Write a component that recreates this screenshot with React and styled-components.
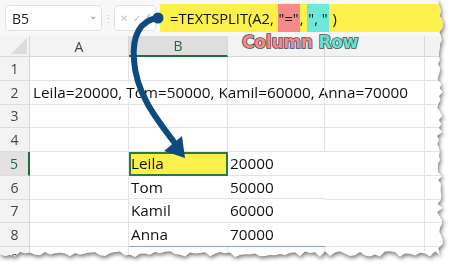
import React from 'react';
import styled, { createGlobalStyle } from 'styled-components';

const GlobalStyle = createGlobalStyle`
  html, body { margin: 0; padding: 0; background: #ffffff; }
  body { width: 450px; height: 270px; overflow: hidden; font-family: "Open Sans", "Noto Sans", sans-serif; }
`;

// jagged outline for the torn right and bottom edges
const rnd = (i) => {
  const x = Math.sin(i * 12.9898 + 78.233) * 43758.5453;
  return x - Math.floor(x);
};
const tornPath = (() => {
  const pts = ['0px 0px', '438px 0px'];
  for (let y = 4; y < 252; y += 4) pts.push(`${437 + rnd(y) * 6}px ${y}px`);
  for (let x = 440; x > 0; x -= 5) pts.push(`${x}px ${251 + rnd(x + 300) * 6}px`);
  pts.push('0px 254px');
  return `polygon(${pts.join(',')})`;
})();

// C, D and E letters sit under the annotation in the screenshot
const columns = ['A', 'B', '', '', ''];
const people = [
  ['Leila', '20000'],
  ['Tom', '50000'],
  ['Kamil', '60000'],
  ['Anna', '70000'],
];

const App = () => {
  return (
    <>
      <GlobalStyle />
      <Page>
        <Shadow>
          <Paper style={{ clipPath: tornPath }}>
            <FormulaBar>
              <NameBox>
                B5
                <Chevron>⌄</Chevron>
              </NameBox>
              <Dots>⋮</Dots>
              <ActionBox>
                <span>✕</span>
                <span>✓</span>
                <Fx>fx</Fx>
              </ActionBox>
              <Formula>
                =TEXTSPLIT(A2,&nbsp;<Mark color="#f58a86">"="</Mark>,&nbsp;<Mark color="#6ee8d8">", "</Mark>&nbsp;)
              </Formula>
            </FormulaBar>

            <Sheet>
              <Corner />
              {columns.map((c, i) => (
                <ColHead key={i} active={c === 'B'}>{c}</ColHead>
              ))}

              {[1, 2, 3, 4].map((r) => (
                <React.Fragment key={r}>
                  <RowHead>{r}</RowHead>
                  <Cell>
                    {r === 2 && <Overflow>Leila=20000, Tom=50000, Kamil=60000, Anna=70000</Overflow>}
                  </Cell>
                  <Cell />
                  <Cell />
                  <Cell />
                  <Cell />
                </React.Fragment>
              ))}

              {people.map(([name], i) => (
                <React.Fragment key={name}>
                  <RowHead active={i === 0}>{i + 5}</RowHead>
                  <Cell />
                  {i === 0 && (
                    <Spill>
                      {people.map(([n, a], j) => (
                        <React.Fragment key={n}>
                          <SpillCell active={j === 0} last={j === 3}>{n}</SpillCell>
                          <SpillCell last={j === 3}>{a}</SpillCell>
                        </React.Fragment>
                      ))}
                    </Spill>
                  )}
                  <Cell />
                  <Cell />
                </React.Fragment>
              ))}

              <RowHead>9</RowHead>
              <Cell />
              <Cell />
              <Cell />
              <Cell />
              <Cell />
            </Sheet>
          </Paper>
        </Shadow>

        <Label>
          <Word fill="#f28a88">Column</Word> <Word fill="#63e3cb">Row</Word>
        </Label>

        <Arrow width="450" height="270" viewBox="0 0 450 270">
          <path
            d="M158 18 C140 20 132 36 134 60 C136 92 154 116 174 142"
            fill="none"
            stroke="#0d4a80"
            strokeWidth="6"
            strokeLinecap="round"
          />
          <circle cx="158" cy="18" r="5.5" fill="#0d4a80" />
          <polygon points="185,158 164,151 182,136" fill="#0d4a80" />
        </Arrow>
      </Page>
    </>
  );
};

export default App;

const Page = styled.div`
  position: relative;
  width: 450px;
  height: 270px;
  background: #ffffff;
`;

const Shadow = styled.div`
  width: 450px;
  height: 264px;
  filter: drop-shadow(1px 2px 2px rgba(0, 0, 0, 0.55));
`;

const Paper = styled.div`
  width: 446px;
  height: 260px;
  background: #ffffff;
  overflow: hidden;
`;

const FormulaBar = styled.div`
  display: flex;
  align-items: center;
  height: 36px;
  padding: 0 0 0 5px;
  background: #f7f7f7;
  box-sizing: border-box;
`;

const NameBox = styled.div`
  display: flex;
  align-items: center;
  justify-content: space-between;
  box-sizing: border-box;
  width: 97px;
  height: 26px;
  padding: 0 4px 0 6px;
  background: #ffffff;
  border: 1px solid #e2e2e2;
  border-radius: 4px;
  font-size: 14px;
  color: #222;
`;

const Chevron = styled.span`
  font-size: 10px;
  color: #888;
  margin-top: -6px;
`;

const Dots = styled.span`
  width: 12px;
  text-align: center;
  font-size: 11px;
  color: #c4c4c4;
`;

const ActionBox = styled.div`
  display: flex;
  align-items: center;
  gap: 5px;
  box-sizing: border-box;
  width: 42px;
  height: 26px;
  padding-left: 5px;
  background: #ffffff;
  border: 1px solid #e2e2e2;
  border-radius: 4px;
  font-size: 10px;
  color: #c2c2c2;
`;

const Fx = styled.span`
  font-style: italic;
  font-family: "Liberation Serif", serif;
  font-size: 11px;
  color: #999;
`;

const Formula = styled.div`
  display: flex;
  align-items: center;
  flex: 1;
  height: 28px;
  margin-left: 4px;
  padding-left: 10px;
  background: #fcf04a;
  font-size: 14.7px;
  color: #111;
  white-space: pre;
`;

const Mark = styled.span`
  display: flex;
  align-items: center;
  height: 100%;
  padding: 0 1px;
  background: ${(p) => p.color};
`;

const Sheet = styled.div`
  display: grid;
  grid-template-columns: 30px 99px 99px 97px 100px 100px;
  grid-template-rows: 21px;
  grid-auto-rows: 23.75px;
  font-size: 15.3px;
  color: #111;
`;

const Corner = styled.div`
  background: #f3f3f3;
  border-bottom: 1px solid #d6d6d6;
  border-right: 1px solid #d6d6d6;
  position: relative;
  &::after {
    content: '';
    position: absolute;
    right: 2px;
    bottom: 2px;
    border-style: solid;
    border-width: 0 0 16px 16px;
    border-color: transparent transparent #dcdcdc transparent;
  }
`;

const ColHead = styled.div`
  display: flex;
  align-items: center;
  justify-content: center;
  background: ${(p) => (p.active ? '#dedede' : '#f3f3f3')};
  color: ${(p) => (p.active ? '#1e6b3f' : '#444')};
  border-right: 1px solid #d8d8d8;
  border-bottom: ${(p) => (p.active ? '2px solid #1e6b3f' : '1px solid #d6d6d6')};
  font-size: 14px;
`;

const RowHead = styled.div`
  display: flex;
  align-items: center;
  justify-content: center;
  background: ${(p) => (p.active ? '#e2e2e2' : '#f3f3f3')};
  color: ${(p) => (p.active ? '#1e6b3f' : '#444')};
  border-bottom: 1px solid #dcdcdc;
  border-right: ${(p) => (p.active ? '2px solid #1e6b3f' : '1px solid #d6d6d6')};
  font-size: 14px;
`;

const Cell = styled.div`
  position: relative;
  display: flex;
  align-items: center;
  border-right: 1px solid #e3e3e3;
  border-bottom: 1px solid #e3e3e3;
`;

const Overflow = styled.span`
  position: absolute;
  left: 3px;
  white-space: nowrap;
  background: #ffffff;
`;

const Spill = styled.div`
  grid-column: span 2;
  grid-row: span 4;
  display: grid;
  grid-template-columns: 99px 97px;
  grid-auto-rows: 1fr;
  margin: -1px 0 0 -1px;
  border: 1px solid #8ea4d2;
`;

const SpillCell = styled.div`
  display: flex;
  align-items: center;
  padding-left: 2px;
  background: ${(p) => (p.active ? '#fcf04a' : '#ffffff')};
  border-bottom: ${(p) => (p.last ? 'none' : '1px solid #e3e3e3')};
  outline: ${(p) => (p.active ? '2px solid #2d7a3f' : 'none')};
  outline-offset: -2px;
`;

const Label = styled.div`
  position: absolute;
  left: 242px;
  top: 32px;
  font-family: "DejaVu Sans", sans-serif;
  font-weight: 700;
  font-size: 17px;
  letter-spacing: -0.2px;
`;

const Word = styled.span`
  color: ${(p) => p.fill};
  -webkit-text-stroke: 1.6px #4a4a4a;
  paint-order: stroke fill;
`;

const Arrow = styled.svg`
  position: absolute;
  left: 0;
  top: 0;
  pointer-events: none;
`;
